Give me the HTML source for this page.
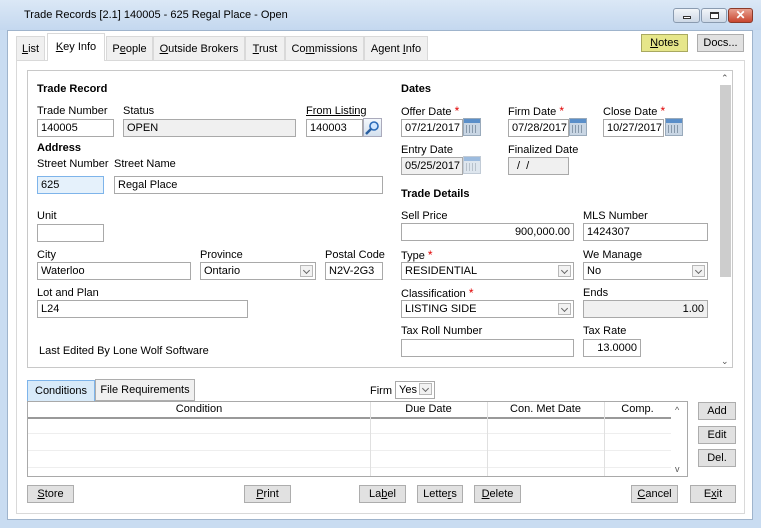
<!DOCTYPE html>
<html><head><style>
*{box-sizing:border-box;margin:0;padding:0}
body{width:761px;height:528px;position:relative;overflow:hidden;background:#c9dcf1;font-family:"Liberation Sans",sans-serif;font-size:11px;color:#000}
div,span{position:absolute}
.l{white-space:nowrap;line-height:13px}
.b{font-weight:bold}
.i{background:#fff;border:1px solid #a9a9a9;height:18px;line-height:16px;padding-left:3px;white-space:nowrap}
.g{background:#f0f0f0}
.r{text-align:right;padding-right:3px}
.dd{position:absolute;right:2px;top:2px;width:13px;height:12px;border:1px solid #b8b8b8;background:#f2f2f2}
.dd:after{content:"";position:absolute;left:3px;top:2px;width:4px;height:4px;border-right:1px solid #666;border-bottom:1px solid #666;transform:rotate(45deg)}
.cal{width:18px;height:18px;background:linear-gradient(#5b8fc9 0 4px,#c9d6e4 4px);border:1px solid #9ab}
.cal:after{content:"";position:absolute;left:2px;top:6px;right:2px;bottom:2px;background:repeating-linear-gradient(90deg,#8899aa 0 1px,transparent 1px 3px)}
.st{color:#e00000;font-size:12px}
.btn{background:#e1e1e1;border:1px solid #adadad;height:18px;line-height:16px;text-align:center;white-space:nowrap}
.tab{background:#f0f0f0;border:1px solid #d9d9d9;border-bottom:none;height:24px;line-height:24px;text-align:center;white-space:nowrap;top:36px}
u{text-decoration:underline}
</style></head><body>
<div style="left:0;top:0;width:761px;height:30px;background:linear-gradient(#dbe8f6,#c4d8ef)"></div>
<div class="l" style="left:24px;top:9px;font-size:11px">Trade Records [2.1] 140005 - 625 Regal Place - Open</div>
<div style="left:673px;top:8px;width:27px;height:15px;border:1px solid #8a9bb0;border-radius:3px;background:linear-gradient(#f2f5f9,#cdd8e6)"><span style="left:9px;top:7px;width:8px;height:3px;border:1px solid #333;background:#fff"></span></div>
<div style="left:701px;top:8px;width:26px;height:15px;border:1px solid #8a9bb0;border-radius:3px;background:linear-gradient(#f2f5f9,#cdd8e6)"><span style="left:8px;top:3px;width:9px;height:7px;border:1px solid #333;border-top-width:2px;background:#fff"></span></div>
<div style="left:728px;top:8px;width:25px;height:15px;border:1px solid #8b3a2a;border-radius:3px;background:linear-gradient(#e8a090,#c9452f);color:#fff;font-weight:bold;text-align:center;line-height:13px;font-size:12px">✕</div>
<div style="left:7px;top:30px;width:746px;height:490px;background:#fff;border:1px solid #9fb4cc"></div>
<div style="left:16px;top:60px;width:729px;height:454px;border:1px solid #d9d9d9;background:#fff"></div>
<div class="tab" style="left:16px;width:29px;height:24px"><u>L</u>ist</div>
<div class="tab" style="left:47px;width:58px;top:33px;height:28px;background:#fff;border-color:#d9d9d9;line-height:26px"><u>K</u>ey Info</div>
<div class="tab" style="left:106px;width:47px">P<u>e</u>ople</div>
<div class="tab" style="left:153px;width:92px"><u>O</u>utside Brokers</div>
<div class="tab" style="left:245px;width:40px"><u>T</u>rust</div>
<div class="tab" style="left:285px;width:79px">Co<u>m</u>missions</div>
<div class="tab" style="left:364px;width:64px">Agent <u>I</u>nfo</div>
<div class="btn" style="left:641px;top:34px;width:47px;height:18px;background:#e6e68a;border-color:#a9a960"><u>N</u>otes</div>
<div class="btn" style="left:697px;top:34px;width:47px;height:18px">Docs...</div>

<div style="left:27px;top:70px;width:706px;height:298px;border:1px solid #c8c8c8;background:#fff"></div>
<div style="left:719px;top:72px;width:12px;height:294px;background:#fff"></div>
<div class="l" style="left:721px;top:72px;font-size:9px;color:#555">⌃</div>
<div style="left:720px;top:85px;width:11px;height:192px;background:#cdcdcd"></div>
<div class="l" style="left:721px;top:355px;font-size:9px;color:#555">⌄</div>

<div class="l b" style="left:37px;top:83px">Trade Record</div>
<div class="l" style="left:37px;top:105px">Trade Number</div>
<div class="i" style="left:37px;top:119px;width:77px">140005</div>
<div class="l" style="left:123px;top:105px">Status</div>
<div class="i g" style="left:123px;top:119px;width:173px">OPEN</div>
<div class="l" style="left:306px;top:105px;text-decoration:underline">From Listing</div>
<div class="i" style="left:306px;top:119px;width:57px">140003</div>
<div style="left:363px;top:118px;width:19px;height:19px;background:linear-gradient(#f4f8fc,#d3e0ee);border:1px solid #aab"><svg width="17" height="17" style="position:absolute;left:0;top:0"><circle cx="10" cy="7" r="4" fill="#cfe6ff" stroke="#2a6bb8" stroke-width="1.6"/><line x1="7" y1="10" x2="2" y2="15" stroke="#2a5fa0" stroke-width="2.5"/></svg></div>
<div class="l b" style="left:37px;top:142px">Address</div>
<div class="l" style="left:37px;top:158px">Street Number</div>
<div class="i" style="left:37px;top:176px;width:67px;background:#e5f1fb;border-color:#7eb4ea">625</div>
<div class="l" style="left:114px;top:158px">Street Name</div>
<div class="i" style="left:114px;top:176px;width:269px">Regal Place</div>
<div class="l" style="left:37px;top:210px">Unit</div>
<div class="i" style="left:37px;top:224px;width:67px"></div>
<div class="l" style="left:37px;top:249px">City</div>
<div class="i" style="left:37px;top:262px;width:154px">Waterloo</div>
<div class="l" style="left:200px;top:249px">Province</div>
<div class="i" style="left:200px;top:262px;width:116px">Ontario<span class="dd"></span></div>
<div class="l" style="left:325px;top:249px">Postal Code</div>
<div class="i" style="left:325px;top:262px;width:58px">N2V-2G3</div>
<div class="l" style="left:37px;top:287px">Lot and Plan</div>
<div class="i" style="left:37px;top:300px;width:211px">L24</div>
<div class="l" style="left:39px;top:345px">Last Edited By Lone Wolf Software</div>

<div class="l b" style="left:401px;top:83px">Dates</div>
<div class="l" style="left:401px;top:105px">Offer Date <span class="st" style="position:static">*</span></div>
<div class="i" style="left:401px;top:119px;width:62px">07/21/2017</div>
<div class="cal" style="left:463px;top:118px"></div>
<div class="l" style="left:508px;top:105px">Firm Date <span class="st" style="position:static">*</span></div>
<div class="i" style="left:508px;top:119px;width:61px">07/28/2017</div>
<div class="cal" style="left:569px;top:118px"></div>
<div class="l" style="left:603px;top:105px">Close Date <span class="st" style="position:static">*</span></div>
<div class="i" style="left:603px;top:119px;width:61px">10/27/2017</div>
<div class="cal" style="left:665px;top:118px"></div>
<div class="l" style="left:401px;top:144px">Entry Date</div>
<div class="i g" style="left:401px;top:157px;width:62px">05/25/2017</div>
<div class="cal" style="left:463px;top:156px;opacity:.6"></div>
<div class="l" style="left:508px;top:144px">Finalized Date</div>
<div class="i g" style="left:508px;top:157px;width:61px;padding-left:8px">/ &nbsp;/</div>
<div class="l b" style="left:401px;top:188px">Trade Details</div>
<div class="l" style="left:401px;top:210px">Sell Price</div>
<div class="i r" style="left:401px;top:223px;width:173px">900,000.00</div>
<div class="l" style="left:583px;top:210px">MLS Number</div>
<div class="i" style="left:583px;top:223px;width:125px">1424307</div>
<div class="l" style="left:401px;top:249px">Type <span class="st" style="position:static">*</span></div>
<div class="i" style="left:401px;top:262px;width:173px">RESIDENTIAL<span class="dd"></span></div>
<div class="l" style="left:583px;top:249px">We Manage</div>
<div class="i" style="left:583px;top:262px;width:125px">No<span class="dd"></span></div>
<div class="l" style="left:401px;top:287px">Classification <span class="st" style="position:static">*</span></div>
<div class="i" style="left:401px;top:300px;width:173px">LISTING SIDE<span class="dd"></span></div>
<div class="l" style="left:583px;top:287px">Ends</div>
<div class="i g r" style="left:583px;top:300px;width:125px">1.00</div>
<div class="l" style="left:401px;top:325px">Tax Roll Number</div>
<div class="i" style="left:401px;top:339px;width:173px"></div>
<div class="l" style="left:583px;top:325px">Tax Rate</div>
<div class="i r" style="left:583px;top:339px;width:58px">13.0000</div>

<div class="btn" style="left:27px;top:380px;width:68px;height:22px;line-height:20px;background:#d8eaf9;border-color:#7eb4ea">Conditions</div>
<div class="btn" style="left:95px;top:379px;width:100px;height:22px;line-height:20px;background:#f0f0f0">File Requirements</div>
<div class="l" style="left:370px;top:385px">Firm</div>
<div class="i" style="left:395px;top:381px;width:40px;height:18px">Yes<span class="dd" style="top:1px"></span></div>
<div style="left:27px;top:401px;width:661px;height:76px;border:1px solid #a9a9a9;background:#fff"></div>
<div style="left:28px;top:417px;width:643px;height:2px;background:#999"></div>
<div style="left:28px;top:433px;width:643px;height:1px;background:#eee"></div>
<div style="left:28px;top:450px;width:643px;height:1px;background:#eee"></div>
<div style="left:28px;top:467px;width:643px;height:1px;background:#eee"></div>
<div style="left:370px;top:402px;width:1px;height:74px;background:#e0e0e0"></div>
<div style="left:487px;top:402px;width:1px;height:74px;background:#e0e0e0"></div>
<div style="left:604px;top:402px;width:1px;height:74px;background:#e0e0e0"></div>
<div class="l" style="left:28px;top:403px;width:342px;text-align:center">Condition</div>
<div class="l" style="left:370px;top:403px;width:117px;text-align:center">Due Date</div>
<div class="l" style="left:487px;top:403px;width:117px;text-align:center">Con. Met Date</div>
<div class="l" style="left:604px;top:403px;width:67px;text-align:center">Comp.</div>
<div class="l" style="left:675px;top:404px;font-size:9px;color:#555">^</div>
<div class="l" style="left:675px;top:463px;font-size:9px;color:#555">v</div>
<div class="btn" style="left:698px;top:402px;width:38px">Add</div>
<div class="btn" style="left:698px;top:426px;width:38px">Edit</div>
<div class="btn" style="left:698px;top:449px;width:38px">Del.</div>
<div class="btn" style="left:27px;top:485px;width:47px"><u>S</u>tore</div>
<div class="btn" style="left:244px;top:485px;width:47px"><u>P</u>rint</div>
<div class="btn" style="left:359px;top:485px;width:47px">La<u>b</u>el</div>
<div class="btn" style="left:417px;top:485px;width:46px">Lette<u>r</u>s</div>
<div class="btn" style="left:474px;top:485px;width:47px"><u>D</u>elete</div>
<div class="btn" style="left:631px;top:485px;width:47px"><u>C</u>ancel</div>
<div class="btn" style="left:690px;top:485px;width:46px">E<u>x</u>it</div>
</body></html>
